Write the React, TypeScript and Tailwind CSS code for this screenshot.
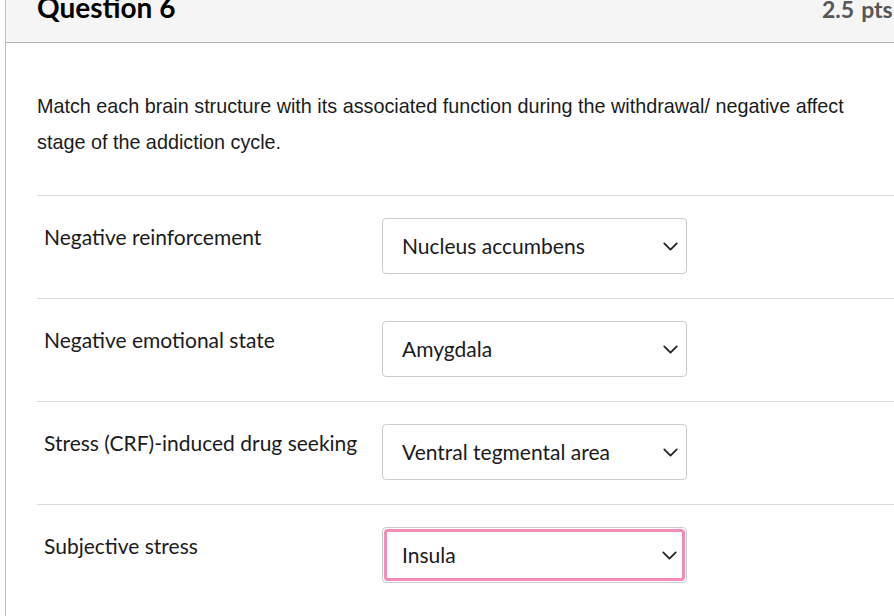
import { ChevronDown } from 'lucide-react'

const rows = [
  { label: 'Negative reinforcement', answer: 'Nucleus accumbens', focused: false },
  { label: 'Negative emotional state', answer: 'Amygdala', focused: false },
  { label: 'Stress (CRF)-induced drug seeking', answer: 'Ventral tegmental area', focused: false },
  { label: 'Subjective stress', answer: 'Insula', focused: true },
]

function SelectBox({ value, focused }: { value: string; focused: boolean }) {
  return (
    <div className="w-[305px] h-[56px] border border-[#c7cdd1] rounded-[4px] bg-white flex">
      <div
        className={
          focused
            ? 'flex-1 m-[1px] border-[3px] border-[#f68ab8] rounded-[4px] flex items-center pl-[15px] pr-0'
            : 'flex-1 flex items-center pl-[19px] pr-[3px]'
        }
      >
        <span className="flex-1 text-[21px] leading-[26px] text-[#1b1b1b] font-['Lato',sans-serif]">{value}</span>
        <ChevronDown className="w-[25px] h-[25px] text-[#222]" strokeWidth={1.7} />
      </div>
    </div>
  )
}

export default function App() {
  return (
    <div className="w-[894px] h-[616px] overflow-hidden bg-white">
      <div className="w-[920px] ml-[5px] border-l border-[#c0c0c0] h-full">
        {/* header */}
        <div className="h-[43px] bg-[#f5f5f5] border-b border-[#b5b5b5] flex items-start pl-[31px] overflow-hidden">
          <h2 className="w-[785px] shrink-0 -mt-[4px] text-[28px] leading-[22px] font-bold text-black font-['Lato',sans-serif]">
            Question 6
          </h2>
          <span className="-mt-[2px] whitespace-nowrap text-[23px] leading-[22px] font-bold text-[#565656] font-['Lato',sans-serif]">
            2.5<span className="ml-[7px]">pts</span>
          </span>
        </div>

        {/* body */}
        <div className="pl-[31px]">
          <p className="w-[840px] pt-[45px] text-[19.8px] leading-[36px] text-[#1b1b1b] font-['Liberation_Sans',Arial,sans-serif]">
            Match each brain structure with its associated function during the withdrawal/ negative affect stage of the addiction cycle.
          </p>

          <div className="mt-[35px]">
            {rows.map((r, i) => (
              <div key={i} className="border-t border-[#dcdcdc] flex items-start pt-[22px] pb-[24px]">
                <div className="w-[345px] pl-[7px] pt-[6px] text-[21px] leading-[26px] text-[#1b1b1b] font-['Lato',sans-serif]">
                  {r.label}
                </div>
                <SelectBox value={r.answer} focused={r.focused} />
              </div>
            ))}
          </div>
        </div>
      </div>
    </div>
  )
}
